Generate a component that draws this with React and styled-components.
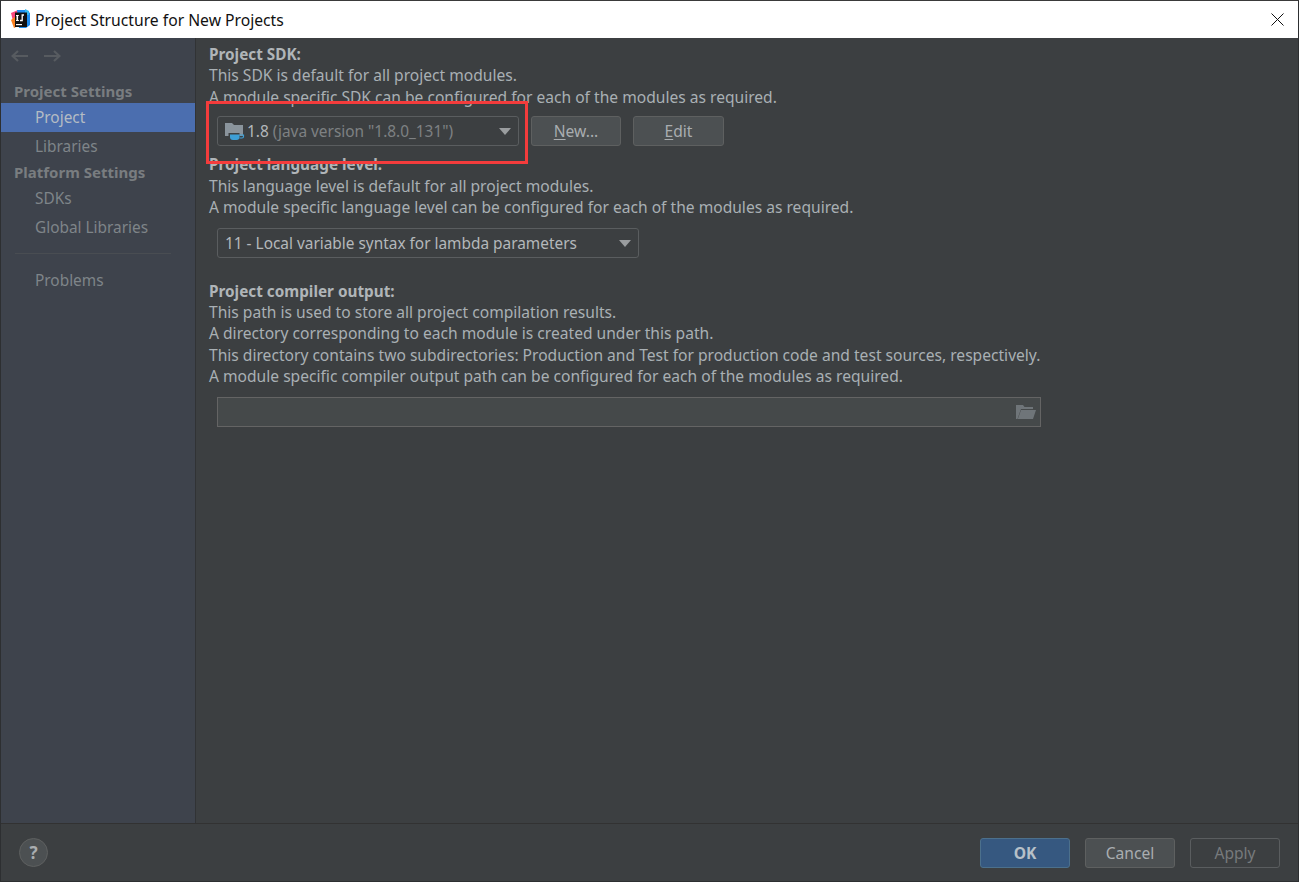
import React from "react";
import styled, { createGlobalStyle } from "styled-components";

const Global = createGlobalStyle`
  html, body { margin: 0; padding: 0; background: #3c3f41; }
  * { box-sizing: border-box; }
`;

const Window = styled.div`
  width: 1299px;
  height: 882px;
  display: flex;
  flex-direction: column;
  border: 1px solid #2d2f31;
  border-top-color: #3a3a3a;
  font-family: "Noto Sans", "Open Sans", sans-serif;
  font-size: 15.6px;
  color: #a9b0b4;
  overflow: hidden;
  position: relative;
`;

const TitleBar = styled.div`
  height: 37px;
  flex: none;
  background: #fff;
  color: #111;
  display: flex;
  align-items: center;
  padding: 0 14px 0 9px;
  gap: 4px;
  font-size: 15.7px;
`;

const TitleText = styled.span`
  flex: 1;
`;

const Body = styled.div`
  flex: 1;
  display: flex;
  min-height: 0;
`;

const Sidebar = styled.div`
  width: 195px;
  flex: none;
  background: #3e434c;
  border-right: 1px solid #313335;
  display: flex;
  flex-direction: column;
`;

const NavArrows = styled.div`
  height: 42px;
  padding: 11px 0 0 10px;
  display: flex;
  gap: 16px;
`;

const GroupLabel = styled.div`
  height: 23px;
  line-height: 23px;
  padding-left: 13px;
  font-size: 15px;
  font-weight: 700;
  color: #797d80;
`;

const NavItem = styled.div`
  height: 29px;
  line-height: 29px;
  padding-left: 34px;
  font-size: 15.4px;
  color: ${(p) => (p.$active ? "#b4bcc4" : "#7f8589")};
  background: ${(p) => (p.$active ? "#4b6eaf" : "transparent")};
`;

const NavDivider = styled.div`
  height: 1px;
  background: #494d52;
  margin: 11px 24px 12px 14px;
`;

const Content = styled.div`
  flex: 1;
  padding: 6px 0 0 13px;
  display: flex;
  flex-direction: column;
`;

const Line = styled.div`
  height: 21.4px;
  line-height: 21.4px;
  white-space: nowrap;
  font-size: ${(p) => (p.$bold ? 15.3 : 15.6)}px;
  font-weight: ${(p) => (p.$bold ? 700 : 400)};
  color: ${(p) => (p.$bold ? "#b0b5b8" : "#a9b0b4")};
`;

const CompilerTitle = styled(Line)`
  height: 20.4px;
`;

const Row = styled.div`
  display: flex;
  align-items: center;
  margin: ${(p) => p.$margin};
  padding-left: 8px;
  gap: 12px;
`;

const Combo = styled.div`
  width: ${(p) => p.$width}px;
  height: 30px;
  border: 1px solid #5a5d5f;
  border-radius: 3px;
  background: #3c3f41;
  display: flex;
  align-items: center;
  padding: 0 7px;
  gap: 2px;
  font-size: 15.4px;
  color: #b4b8bb;
`;

const ComboText = styled.span`
  flex: 1;
  white-space: nowrap;
`;

const Muted = styled.span`
  color: #7e8183;
`;

const Caret = styled.span`
  width: 0;
  height: 0;
  border-left: 6.5px solid transparent;
  border-right: 6.5px solid transparent;
  border-top: 7px solid #9a9d9f;
`;

const Button = styled.div`
  width: ${(p) => p.$width || 90}px;
  height: 30px;
  border-radius: 3px;
  display: flex;
  align-items: center;
  justify-content: center;
  background: ${(p) =>
    p.$primary ? "#365880" : p.$disabled ? "transparent" : "#4c5052"};
  border: 1px solid
    ${(p) => (p.$primary ? "#4c708c" : p.$disabled ? "#5a5d5f" : "#5e6060")};
  color: ${(p) =>
    p.$primary ? "#b7c0c8" : p.$disabled ? "#777a7c" : "#a9adb0"};
  font-weight: ${(p) => (p.$primary ? 700 : 400)};
`;

const Mnemonic = styled.span`
  text-decoration: underline;
  text-underline-offset: 2px;
`;

const PathField = styled.div`
  width: 824px;
  height: 30px;
  margin: 10px 0 0 8px;
  background: #45494a;
  border: 1px solid #646464;
  display: flex;
  align-items: center;
  justify-content: flex-end;
  padding-right: 4px;
`;

const Footer = styled.div`
  height: 58px;
  flex: none;
  border-top: 1px solid #323232;
  display: flex;
  align-items: center;
  padding: 0 18px;
  gap: 15px;
`;

const HelpButton = styled.div`
  width: 29px;
  height: 29px;
  border-radius: 50%;
  background: #4c5052;
  border: 1px solid #5e6060;
  color: #a9adb0;
  font-weight: 700;
  font-size: 17px;
  display: flex;
  align-items: center;
  justify-content: center;
  margin-right: auto;
`;

const Highlight = styled.div`
  position: absolute;
  left: 205px;
  top: 100px;
  width: 322px;
  height: 63px;
  border: 3px solid #f43c3c;
  pointer-events: none;
`;

function IdeaLogo() {
  return (
    <svg width="21" height="21" viewBox="0 0 21 21">
      <path d="M1 4 8 1v9L3 12z" fill="#f9487c" />
      <path d="M7 1h9l4 3v12l-4 3H9z" fill="#1d8cf0" />
      <path d="M1 11l5-4v11l-2 1z" fill="#fc801d" />
      <path d="M15 0l4 2v4h-4z" fill="#35b8f0" />
      <rect x="5" y="3.500" width="12" height="14.500" fill="#111" />
      <rect x="6.500" y="6" width="1.600" height="6" fill="#fff" />
      <rect x="6" y="6" width="2.800" height="1" fill="#fff" />
      <rect x="6" y="11" width="2.800" height="1" fill="#fff" />
      <path d="M10 11.500h2.200V6H14" fill="none" stroke="#fff" strokeWidth="1.300" />
      <rect x="6" y="15" width="6" height="1.200" fill="#fff" />
    </svg>
  );
}

function Arrow({ flip }) {
  return (
    <svg width="17" height="14" viewBox="0 0 17 14" style={flip ? { transform: "scaleX(-1)" } : undefined}>
      <path d="M7 2 1.500 7 7 12M2 7h15" fill="none" stroke="#575b60" strokeWidth="2.200" />
    </svg>
  );
}

function SdkIcon() {
  return (
    <svg width="20" height="19" viewBox="0 0 20 19">
      <path d="M0 1h7l2 2h9v11H0z" fill="#8a949c" />
      <path d="M3.500 11h11v3.500a4 4 0 0 1-4 4h-3a4 4 0 0 1-4-4z" fill="#3c3f41" />
      <path d="M5 12.500h9.500V15a3 3 0 0 1-3 3H8a3 3 0 0 1-3-3z" fill="#3d9fd6" />
      <path d="M14.500 13h4v1.500a1.500 1.500 0 0 1-1.500 1.500h-2.500" fill="none" stroke="#3d9fd6" strokeWidth="1.200" />
    </svg>
  );
}

function FolderIcon() {
  return (
    <svg width="20" height="16" viewBox="0 0 20 16">
      <path d="M0 1h7l1.500 2H17v2H5L1.500 15H0z" fill="#6f7579" />
      <path d="M5 6h15l-3 9H1.800z" fill="#6f7579" />
    </svg>
  );
}

function CloseIcon() {
  return (
    <svg width="13" height="13" viewBox="0 0 13 13">
      <path d="M.5.500l12 12M12.500.500l-12 12" stroke="#111" strokeWidth="1" fill="none" />
    </svg>
  );
}

export default function App() {
  return (
    <Window>
      <Global />
      <TitleBar>
        <IdeaLogo />
        <TitleText>Project Structure for New Projects</TitleText>
        <CloseIcon />
      </TitleBar>
      <Body>
        <Sidebar>
          <NavArrows>
            <Arrow />
            <Arrow flip />
          </NavArrows>
          <GroupLabel>Project Settings</GroupLabel>
          <NavItem $active>Project</NavItem>
          <NavItem>Libraries</NavItem>
          <GroupLabel>Platform Settings</GroupLabel>
          <NavItem>SDKs</NavItem>
          <NavItem>Global Libraries</NavItem>
          <NavDivider />
          <NavItem>Problems</NavItem>
        </Sidebar>
        <Content>
          <Line $bold>Project SDK:</Line>
          <Line>This SDK is default for all project modules.</Line>
          <Line>A module specific SDK can be configured for each of the modules as required.</Line>
          <Row $margin="8px 0 8px">
            <Combo $width={302}>
              <SdkIcon />
              <ComboText>
                1.8 <Muted>(java version "1.8.0_131")</Muted>
              </ComboText>
              <Caret />
            </Combo>
            <Button>
              <span>
                <Mnemonic>N</Mnemonic>ew...
              </span>
            </Button>
            <Button $width={91}>
              <span>
                <Mnemonic>E</Mnemonic>dit
              </span>
            </Button>
          </Row>
          <Line $bold>Project language level:</Line>
          <Line>This language level is default for all project modules.</Line>
          <Line>A module specific language level can be configured for each of the modules as required.</Line>
          <Row $margin="10px 0 23px">
            <Combo $width={422}>
              <ComboText>11 - Local variable syntax for lambda parameters</ComboText>
              <Caret />
            </Combo>
          </Row>
          <CompilerTitle $bold>Project compiler output:</CompilerTitle>
          <Line>This path is used to store all project compilation results.</Line>
          <Line>A directory corresponding to each module is created under this path.</Line>
          <Line>This directory contains two subdirectories: Production and Test for production code and test sources, respectively.</Line>
          <Line>A module specific compiler output path can be configured for each of the modules as required.</Line>
          <PathField>
            <FolderIcon />
          </PathField>
        </Content>
      </Body>
      <Footer>
        <HelpButton>?</HelpButton>
        <Button $primary>OK</Button>
        <Button>Cancel</Button>
        <Button $disabled>Apply</Button>
      </Footer>
      <Highlight />
    </Window>
  );
}
